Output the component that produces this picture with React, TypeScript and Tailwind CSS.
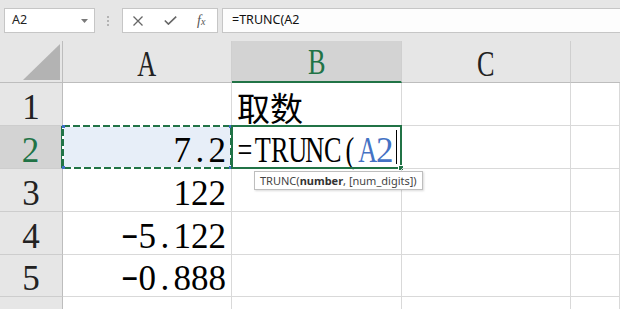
import React from 'react'

const serif = "font-['Liberation_Serif','Noto_Sans_CJK_SC',serif]"
const ui = "font-['Noto_Sans','Open_Sans',sans-serif]"

// SimSun-like half-width cells: every glyph gets the same 17.5px slot
function Sim({ text }: { text: string }) {
  return (
    <span className="inline-flex">
      {Array.from(text).map((ch, i) => (
        <span key={i} className="inline-flex w-[17.5px] justify-center">
          {/[A-Z=(]/.test(ch) ? (
            <span className="inline-block scale-x-75">{ch}</span>
          ) : ch === '-' ? (
            <span className="inline-block scale-x-150 -translate-y-[3px]">{ch}</span>
          ) : (
            ch
          )}
        </span>
      ))}
    </span>
  )
}

function Toolbar() {
  return (
    <div className={`h-[41px] bg-[#e6e6e6] flex items-start pt-[8px] ${ui}`}>
      <div className="ml-[4px] w-[91px] h-[25px] bg-white border border-[#c6c6c6] flex items-center pl-[7px] pr-[6px] text-[12.5px] text-[#222]">
        <span className="flex-1">A2</span>
        <svg width="7" height="4" viewBox="0 0 7 4">
          <path d="M0 0h7L3.5 4z" fill="#7a7a7a" />
        </svg>
      </div>
      <div className="ml-[12px] w-[2px] h-[25px] flex flex-col items-center justify-center gap-[2px]">
        <div className="w-[2px] h-[2px] bg-[#b3b3b3]"></div>
        <div className="w-[2px] h-[2px] bg-[#b3b3b3]"></div>
        <div className="w-[2px] h-[2px] bg-[#b3b3b3]"></div>
      </div>
      <div className="ml-[13px] w-[96px] h-[25px] bg-white border border-[#c6c6c6] flex items-center pl-[10px]">
        <svg width="10" height="10" viewBox="0 0 10 10">
          <path d="M0.5 0.5l9 9M9.5 0.5l-9 9" stroke="#666" strokeWidth="1.3" />
        </svg>
        <svg className="ml-[21px]" width="13" height="9" viewBox="0 0 13 9">
          <path d="M0.8 4.5l3.6 3.6L12.2 0.6" stroke="#666" strokeWidth="1.6" fill="none" />
        </svg>
        <span className={`ml-[20px] italic text-[14px] leading-none text-[#555] ${serif}`}>
          f<span className="text-[10px]">x</span>
        </span>
      </div>
      <div className="ml-[4px] flex-1 h-[25px] bg-[#fdfdfd] border border-[#c6c6c6] border-r-0 flex items-center pl-[9px] text-[12.5px] text-[#111]">
        =TRUNC(A2
      </div>
    </div>
  )
}

function RowHead({ n, active, h }: { n: string; active?: boolean; h: string }) {
  return (
    <div
      className={`${h} w-[63px] shrink-0 box-border border-b border-b-[#cdcdcd] flex items-end justify-center ${
        active ? 'bg-[#d3d3d3] text-[#217346] border-r-2 border-r-[#217346]' : 'bg-[#e6e6e6] text-[#222] border-r border-r-[#bdbdbd]'
      }`}
    >
      <Sim text={n} />
    </div>
  )
}

function Cell({ w, children, className = '' }: { w: string; children?: React.ReactNode; className?: string }) {
  return (
    <div className={`${w} shrink-0 h-full box-border border-r border-b border-[#d9d9d9] flex items-end relative ${className}`}>
      {children}
    </div>
  )
}

export default function App() {
  return (
    <div className={`w-[620px] h-[309px] overflow-hidden bg-white relative ${serif} text-[35px] leading-none text-black`}>
      <Toolbar />

      {/* column headers */}
      <div className="flex h-[42px]">
        <div className="w-[63px] shrink-0 bg-[#e6e6e6] box-border border-r border-b border-[#bdbdbd] flex items-end justify-end pr-[2px] pb-[2px]">
          <svg width="37" height="36" viewBox="0 0 37 36">
            <path d="M37 0V36H0z" fill="#b3b3b3" />
          </svg>
        </div>
        <div className="w-[169px] shrink-0 bg-[#e6e6e6] box-border border-r border-r-[#cfcfcf] border-b border-b-[#bdbdbd] flex items-end justify-center text-[#222]">
          <Sim text="A" />
        </div>
        <div className="w-[170px] shrink-0 bg-[#d3d3d3] box-border border-r border-r-[#cfcfcf] border-b-2 border-b-[#217346] flex items-end justify-center text-[#217346] pb-[1px]">
          <Sim text="B" />
        </div>
        <div className="w-[169px] shrink-0 bg-[#e6e6e6] box-border border-r border-r-[#cfcfcf] border-b border-b-[#bdbdbd] flex items-end justify-center text-[#222]">
          <Sim text="C" />
        </div>
        <div className="flex-1 bg-[#e6e6e6] box-border border-b border-b-[#bdbdbd]"></div>
      </div>

      {/* row 1 */}
      <div className="flex h-[43px]">
        <RowHead n="1" h="h-[43px]" />
        <Cell w="w-[169px]" />
        <Cell w="w-[170px]" className="pl-[5px]">
          <span className="text-[33px] font-['Noto_Sans_CJK_SC',sans-serif] leading-none mb-[1px]">取数</span>
        </Cell>
        <Cell w="w-[169px]" />
        <Cell w="flex-1" />
      </div>

      {/* row 2 */}
      <div className="flex h-[43px]">
        <RowHead n="2" h="h-[43px]" active />
        <Cell w="w-[169px]" className="justify-end pr-[5px] bg-[#e7eef8]">
          <Sim text="7.2" />
          <svg className="absolute -left-[1px] -top-[1px]" width="170" height="44" viewBox="0 0 170 44">
            <rect x="1" y="1" width="168" height="42" fill="none" stroke="#fff" strokeWidth="2" />
            <rect x="1" y="1" width="168" height="42" fill="none" stroke="#217346" strokeWidth="2" strokeDasharray="7 3" />
            <rect x="0" y="0" width="3" height="3" fill="#3e6fc6" />
            <rect x="167" y="0" width="3" height="3" fill="#3e6fc6" />
            <rect x="0" y="41" width="3" height="3" fill="#3e6fc6" />
            <rect x="167" y="41" width="3" height="3" fill="#3e6fc6" />
          </svg>
        </Cell>
        <Cell w="w-[170px]" className="pl-[4px]">
          <Sim text="=TRUNC(" />
          <span className="text-[#4472c4] inline-flex">
            <Sim text="A2" />
          </span>
          <span className="w-[1px] h-[34px] bg-black ml-[2px] mb-[4px]"></span>
          <div className="absolute -left-[1px] -top-[1px] w-[171px] h-[44px] border-2 border-[#217346]"></div>
          <div className="absolute -right-[3px] -bottom-[3px] w-[6px] h-[6px] bg-[#217346] border border-white"></div>
        </Cell>
        <Cell w="w-[169px]" />
        <Cell w="flex-1" />
      </div>

      {/* row 3 */}
      <div className="flex h-[43px]">
        <RowHead n="3" h="h-[43px]" />
        <Cell w="w-[169px]" className="justify-end pr-[5px]">
          <Sim text="122" />
        </Cell>
        <Cell w="w-[170px]" />
        <Cell w="w-[169px]" />
        <Cell w="flex-1" />
      </div>

      {/* row 4 */}
      <div className="flex h-[43px]">
        <RowHead n="4" h="h-[43px]" />
        <Cell w="w-[169px]" className="justify-end pr-[5px]">
          <Sim text="-5.122" />
        </Cell>
        <Cell w="w-[170px]" />
        <Cell w="w-[169px]" />
        <Cell w="flex-1" />
      </div>

      {/* row 5 */}
      <div className="flex h-[42px]">
        <RowHead n="5" h="h-[42px]" />
        <Cell w="w-[169px]" className="justify-end pr-[5px]">
          <Sim text="-0.888" />
        </Cell>
        <Cell w="w-[170px]" />
        <Cell w="w-[169px]" />
        <Cell w="flex-1" />
      </div>

      {/* row 6 */}
      <div className="flex h-[43px]">
        <RowHead n="" h="h-[43px]" />
        <Cell w="w-[169px]" />
        <Cell w="w-[170px]" />
        <Cell w="w-[169px]" />
        <Cell w="flex-1" />
      </div>

      {/* argument tooltip */}
      <div className={`absolute top-[171px] left-[254px] h-[19px] px-[5px] bg-white border border-[#bebebe] shadow-[1px_1px_2px_rgba(0,0,0,0.15)] flex items-center text-[11px] leading-none text-[#444] ${ui}`}>
        TRUNC(<b className="font-bold text-[#333]">number</b>, [num_digits])
      </div>
    </div>
  )
}
